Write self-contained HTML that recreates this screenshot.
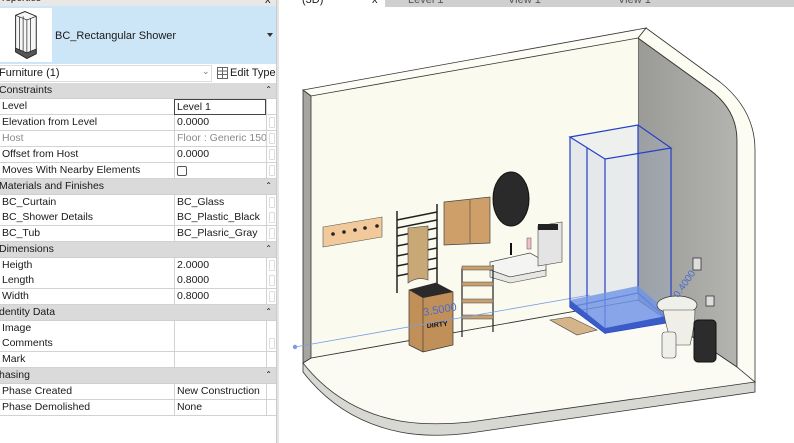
<!DOCTYPE html>
<html><head><meta charset="utf-8"><style>
*{margin:0;padding:0;box-sizing:border-box}
body{width:794px;height:443px;overflow:hidden;background:#fff;font-family:"Liberation Sans",sans-serif;font-size:10.5px;color:#1a1a1a;position:relative}
.a{position:absolute}
.row{position:absolute;left:0;width:276px;height:16px;border-bottom:1px solid #d2d2d2;background:#fff}
.row .k{position:absolute;left:2px;top:1px;white-space:nowrap}
.row .v{position:absolute;left:174px;top:0;width:92px;height:16px;border-left:1px solid #d2d2d2;padding:1px 0 0 2px;white-space:nowrap;overflow:hidden}
.row .s{position:absolute;left:266px;top:0;width:10px;height:16px;border-left:1px solid #d2d2d2}
.row .s i{position:absolute;left:2px;top:2px;width:6px;height:11px;border:1px solid #ddd;border-radius:1px}
.hd{position:absolute;left:0;width:276px;height:16px;background:#dadada;border-bottom:1px solid #cfcfcf}
.hd .k{position:absolute;left:-1px;top:1px}
.hd .c{position:absolute;right:4px;top:2px;font-size:8px}
</style></head><body>
<div class="a" style="left:0;top:0;width:276px;height:6px;background:#e8e8e8"></div>
<div class="a" style="left:2px;top:-7px;font-size:10px">roperties</div>
<div class="a" style="left:265px;top:-6px;font-size:11px">x</div>
<div class="a" style="left:0;top:6px;width:276px;height:58px;background:#cde6f7"></div>
<div class="a" style="left:0;top:8px;width:52px;height:54px;background:#fff"></div>
<svg class="a" style="left:10px;top:9px" width="30" height="52" viewBox="0 0 32 52">
<path d="M6 5 L16 1 L28 6 L28 46 L18 51 L6 44 Z" fill="#f6f6f6" stroke="#222" stroke-width="1"/>
<path d="M6 5 L18 10 L28 6 M18 10 L18 51 M10 7 L10 46 M14 6 L14 48 M22 8 L22 49" fill="none" stroke="#333" stroke-width=".8"/>
<path d="M6 40 L18 45 L28 41 L28 46 L18 51 L6 44 Z" fill="#555" stroke="#222" stroke-width=".8"/>
</svg>
<div class="a" style="left:55px;top:30px;font-size:11px">BC_Rectangular Shower</div>
<div class="a" style="left:267px;top:33px;width:0;height:0;border-left:3px solid transparent;border-right:3px solid transparent;border-top:4px solid #333"></div>
<div class="a" style="left:0;top:65px;width:212px;height:17px;border:1px solid #ddd;border-left:none;background:#fff"></div>
<div class="a" style="left:-1px;top:67px;font-size:11px">Furniture (1)</div>
<div class="a" style="left:202px;top:66px;font-size:9px;color:#777">⌄</div>
<svg class="a" style="left:217px;top:67px" width="11" height="12"><rect x=".5" y=".5" width="10" height="11" fill="#fff" stroke="#666"/><path d="M5.5 1v10M1 4h9M1 7.5h9" stroke="#666"/></svg>
<div class="a" style="left:230px;top:67px;font-size:11px">Edit Type</div>

<div class="hd" style="top:83px"><span class="k">Constraints</span><span class="c">⌃</span></div>
<div class="row" style="top:99px"><span class="k">Level</span><span class="v" style="border:1px solid #444">Level 1</span><span class="s"></span></div>
<div class="row" style="top:115px"><span class="k">Elevation from Level</span><span class="v">0.0000</span><span class="s"><i></i></span></div>
<div class="row" style="top:131px;color:#8a8a8a"><span class="k">Host</span><span class="v">Floor : Generic 150...</span><span class="s"><i></i></span></div>
<div class="row" style="top:147px"><span class="k">Offset from Host</span><span class="v">0.0000</span><span class="s"><i></i></span></div>
<div class="row" style="top:163px"><span class="k">Moves With Nearby Elements</span><span class="v"><span style="display:inline-block;width:10px;height:10px;border:1px solid #555;border-radius:2px;margin-top:2px"></span></span><span class="s"><i></i></span></div>
<div class="hd" style="top:179px"><span class="k">Materials and Finishes</span><span class="c">⌃</span></div>
<div class="row" style="top:195px"><span class="k">BC_Curtain</span><span class="v">BC_Glass</span><span class="s"><i></i></span></div>
<div class="row" style="top:210px"><span class="k">BC_Shower Details</span><span class="v">BC_Plastic_Black</span><span class="s"><i></i></span></div>
<div class="row" style="top:226px"><span class="k">BC_Tub</span><span class="v">BC_Plasric_Gray</span><span class="s"><i></i></span></div>
<div class="hd" style="top:242px"><span class="k">Dimensions</span><span class="c">⌃</span></div>
<div class="row" style="top:258px"><span class="k">Heigth</span><span class="v">2.0000</span><span class="s"><i></i></span></div>
<div class="row" style="top:273px"><span class="k">Length</span><span class="v">0.8000</span><span class="s"><i></i></span></div>
<div class="row" style="top:289px"><span class="k">Width</span><span class="v">0.8000</span><span class="s"><i></i></span></div>
<div class="hd" style="top:305px"><span class="k">dentity Data</span><span class="c">⌃</span></div>
<div class="row" style="top:321px"><span class="k">Image</span><span class="v"></span><span class="s"></span></div>
<div class="row" style="top:336px"><span class="k">Comments</span><span class="v"></span><span class="s"><i></i></span></div>
<div class="row" style="top:352px"><span class="k">Mark</span><span class="v"></span><span class="s"></span></div>
<div class="hd" style="top:368px"><span class="k">hasing</span><span class="c">⌃</span></div>
<div class="row" style="top:384px"><span class="k">Phase Created</span><span class="v">New Construction</span><span class="s"></span></div>
<div class="row" style="top:400px"><span class="k">Phase Demolished</span><span class="v">None</span><span class="s"></span></div>
<div class="a" style="left:276px;top:0;width:3px;height:443px;background:#e4e4e4;border-left:1px solid #ccc"></div>

<div class="a" style="left:385px;top:0;width:409px;height:7px;background:#cfcfcf"></div>
<div class="a" style="left:302px;top:-6px;font-size:11px">(3D)</div>
<div class="a" style="left:372px;top:-6px;font-size:11px">x</div>
<div class="a" style="left:408px;top:-6px;font-size:11px;color:#555">Level 1</div>
<div class="a" style="left:508px;top:-6px;font-size:11px;color:#555">View 1</div>
<div class="a" style="left:618px;top:-6px;font-size:11px;color:#555">View 1</div>

<svg class="a" style="left:0;top:0" width="794" height="443" viewBox="0 0 794 443">
<defs>
<linearGradient id="rw" x1="0" x2="1"><stop offset="0" stop-color="#9a9b96"/><stop offset="1" stop-color="#b3b4af"/></linearGradient>
</defs>
<path d="M303 363 L303 372 Q340 420 400 432 Q430 438 470 433 L755 392 L755 382 Z" fill="#d8d8d2" stroke="#333" stroke-width=".8"/>
<path d="M303 363 Q340 410 400 421 Q430 426 470 422 L755 382 L737 367 L638 300 L311 358 Z" fill="#fbfbf4" stroke="#333" stroke-width=".8"/>
<path d="M638 38 L710 90 Q737 110 737 140 L737 367 L638 300 Z" fill="url(#rw)" stroke="#333" stroke-width=".8"/>
<path d="M646 28 L720 82 Q755 110 755 150 L755 382 L737 367 L737 140 Q737 110 710 90 L638 38 Z" fill="#fcfcf2" stroke="#333" stroke-width=".8"/>
<path d="M311 96 L638 38 L638 300 L311 358 Z" fill="#fbfaee"/>
<path d="M303 90 L646 28 L638 38 L311 96 Z" fill="#fdfdf5" stroke="#333" stroke-width=".8"/>
<path d="M303 90 L311 96 L311 358 L303 363 Z" fill="#a5a6a0" stroke="#333" stroke-width=".8"/>
<line x1="311" y1="358" x2="638" y2="300" stroke="#333" stroke-width=".8"/>
<path d="M323 227 L382 217 L382 237 L323 247 Z" fill="#f2c99a" stroke="#555" stroke-width=".6"/>
<g fill="#222"><circle cx="333" cy="234" r="1.8"/><circle cx="344" cy="232" r="1.8"/><circle cx="355" cy="230" r="1.8"/><circle cx="365" cy="228" r="1.8"/><circle cx="377" cy="226" r="1.8"/></g>
<g stroke="#222" stroke-width="1.5" fill="none"><line x1="397" y1="211" x2="397" y2="293"/><line x1="437" y1="204" x2="437" y2="285"/>
<path d="M397 220 L437 212 M397 228 L437 220 M397 236 L437 228 M397 246 L437 238 M397 256 L437 248 M397 266 L437 258 M397 276 L437 268"/></g>
<path d="M408 228 L428 226 L428 280 Q418 276 408 283 Z" fill="#c9a878" stroke="#444" stroke-width=".6"/>
<path d="M409 290 L436 283 L453 292 L453 345 L423 352 L409 345 Z" fill="#c18f58" stroke="#333" stroke-width=".7"/>
<path d="M409 290 L436 283 L453 292 L423 298 Z" fill="#2a2a2a"/>
<line x1="423" y1="298" x2="423" y2="352" stroke="#333" stroke-width=".6"/>
<text x="427" y="328" font-size="7" font-weight="bold" fill="#111" transform="rotate(-6 427 328)">DIRTY</text>
<path d="M444 202 L490 197 L490 243 L444 245 Z" fill="#cf9f6a" stroke="#444" stroke-width=".7"/>
<line x1="470" y1="200" x2="470" y2="243" stroke="#444" stroke-width=".6"/>
<ellipse cx="511" cy="199" rx="18" ry="27" fill="#2a2a2a" stroke="#111"/>
<path d="M490 262 L530 253 L546 262 L546 270 L510 277 L490 270 Z" fill="#f4f4f2" stroke="#444" stroke-width=".7"/>
<path d="M490 270 L510 277 L546 270 L546 276 L510 283 L490 277 Z" fill="#e6e6e2" stroke="#444" stroke-width=".6"/>
<line x1="511" y1="243" x2="511" y2="255" stroke="#111" stroke-width="2"/>
<rect x="527" y="238" width="4" height="11" fill="#f0c0c8" stroke="#555" stroke-width=".5"/>
<path d="M538 226 L562 222 L562 262 L538 266 Z" fill="#e4e4e4" stroke="#444" stroke-width=".6"/>
<rect x="538" y="224" width="20" height="6" fill="#222"/>
<g stroke="#222" stroke-width="1.2"><line x1="462" y1="268" x2="462" y2="337"/><line x1="493" y1="265" x2="493" y2="332"/></g>
<g fill="#c9a070" stroke="#444" stroke-width=".5"><rect x="462" y="266" width="31" height="4"/><rect x="462" y="282" width="31" height="4"/><rect x="462" y="299" width="31" height="4"/><rect x="462" y="315" width="31" height="4"/></g>
<line x1="295" y1="347" x2="590" y2="295" stroke="#7a9ce6" stroke-width=".8"/>
<circle cx="295" cy="347" r="2.2" fill="#7a9ce6"/>
<text x="424" y="316" font-size="11" fill="#4a6cd0" transform="rotate(-10 424 316)">3.5000</text>
<path d="M550 320 L570 317 L597 330 L577 335 Z" fill="#d4b488" stroke="#444" stroke-width=".6"/>
<path d="M605 159 L671 148 L671 322 L605 333 Z" fill="rgba(160,180,230,.22)"/>
<path d="M570 137 L605 159 L605 333 L570 307 Z" fill="rgba(140,160,220,.2)"/>
<g stroke="#2540c8" stroke-width="1.2" fill="none">
<path d="M570 137 L605 159 L671 148 L638 125 Z" fill="rgba(170,190,235,.15)"/>
<path d="M570 137 L570 307 L605 333 L605 159 M605 333 L671 322 L671 148 M638 125 L638 293 M570 307 L638 293 L671 322" />
<path d="M587 148 L587 318" />
</g>
<path d="M570 300 L638 286 L671 315 L605 328 Z" fill="#6f93e6" opacity=".8"/>
<path d="M570 300 L570 307 L605 333 L671 322 L671 315 L605 328 Z" fill="#3a5cc8"/>
<ellipse cx="677" cy="305" rx="20" ry="9" fill="#f0f0ea" stroke="#333" stroke-width=".7"/>
<path d="M663 310 Q667 330 672 345 L690 345 Q695 325 695 310 Z" fill="#efefe8" stroke="#444" stroke-width=".6"/>
<rect x="662" y="332" width="14" height="26" rx="3" fill="#f0f0ea" stroke="#444" stroke-width=".6"/>
<rect x="694" y="320" width="22" height="42" rx="4" fill="#2c2c2c" stroke="#111"/>
<rect x="693" y="258" width="8" height="12" fill="#ddd" stroke="#222" stroke-width=".7"/>
<rect x="706" y="296" width="8" height="10" fill="#ddd" stroke="#222" stroke-width=".7"/>
<text x="674" y="290" font-size="10" fill="#4a6cd0" transform="rotate(-55 684 290)">0.4000</text>
</svg>
</body></html>
